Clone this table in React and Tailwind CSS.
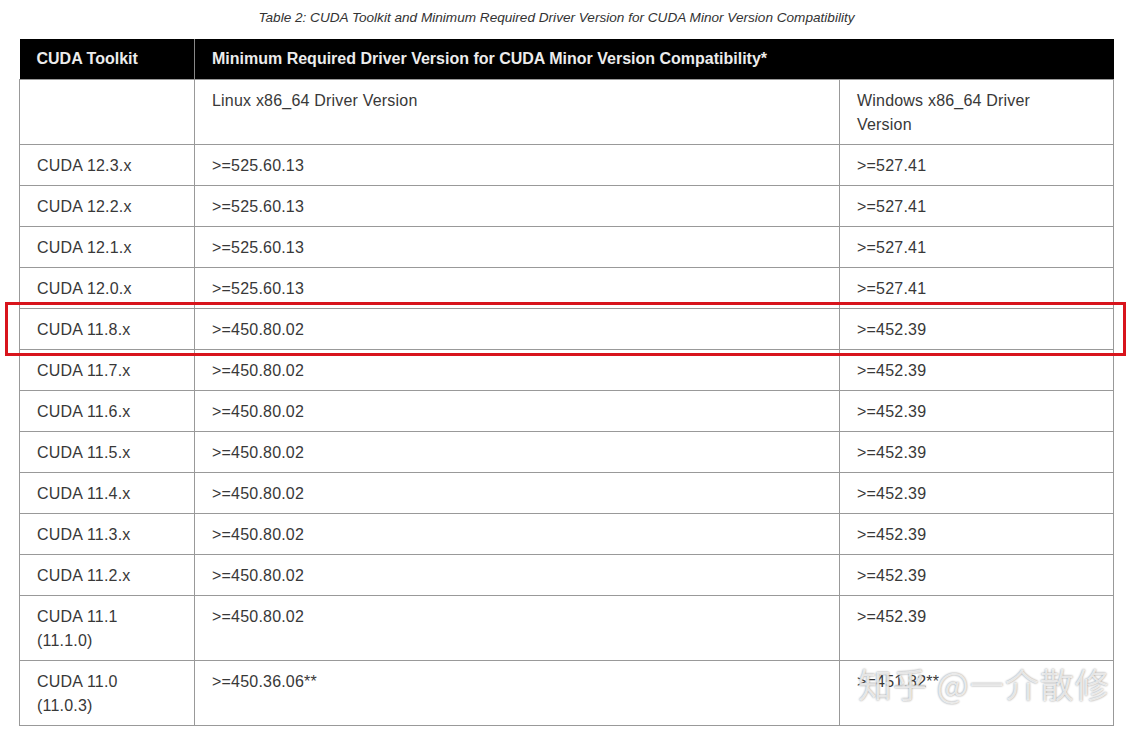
import React from "react";

const rows = [
  ["CUDA 12.3.x", ">=525.60.13", ">=527.41"],
  ["CUDA 12.2.x", ">=525.60.13", ">=527.41"],
  ["CUDA 12.1.x", ">=525.60.13", ">=527.41"],
  ["CUDA 12.0.x", ">=525.60.13", ">=527.41"],
  ["CUDA 11.8.x", ">=450.80.02", ">=452.39"],
  ["CUDA 11.7.x", ">=450.80.02", ">=452.39"],
  ["CUDA 11.6.x", ">=450.80.02", ">=452.39"],
  ["CUDA 11.5.x", ">=450.80.02", ">=452.39"],
  ["CUDA 11.4.x", ">=450.80.02", ">=452.39"],
  ["CUDA 11.3.x", ">=450.80.02", ">=452.39"],
  ["CUDA 11.2.x", ">=450.80.02", ">=452.39"],
  [["CUDA 11.1", "(11.1.0)"], ">=450.80.02", ">=452.39"],
  [["CUDA 11.0", "(11.0.3)"], ">=450.36.06**", ">=451.82**"],
];

const td = "border border-[#999] align-top px-[17px] pt-[9px] pb-[7px] leading-6";

export default function App() {
  return (
    <div className="w-[1135px] h-[734px] bg-white overflow-hidden relative font-['Liberation_Sans',Arial,sans-serif] text-[#383838]">
      <p className="text-center italic text-[13.6px] text-[#333] pt-[8px] pr-[22px] h-[39px]">
        Table 2: CUDA Toolkit and Minimum Required Driver Version for CUDA Minor Version Compatibility
      </p>
      <table className="ml-[19px] w-[1094px] table-fixed border-collapse text-[16px] tracking-[0.2px]">
        <colgroup>
          <col className="w-[175px]" />
          <col className="w-[645px]" />
          <col className="w-[274px]" />
        </colgroup>
        <thead>
          <tr className="bg-black text-[#ececec] h-[40px]">
            <th className="text-left font-bold text-[16px] px-[17px] border-r border-[#888] tracking-normal">CUDA Toolkit</th>
            <th colSpan={2} className="text-left font-bold text-[16px] px-[17px] tracking-normal">
              Minimum Required Driver Version for CUDA Minor Version Compatibility*
            </th>
          </tr>
        </thead>
        <tbody>
          <tr className="h-[65px]">
            <td className={td}></td>
            <td className={td}>Linux x86_64 Driver Version</td>
            <td className={td}>
              <div className="max-w-[200px]">Windows x86_64 Driver Version</div>
            </td>
          </tr>
          {rows.map((r, i) => (
            <tr key={i}>
              <td className={td}>
                {Array.isArray(r[0]) ? r[0].map((l) => <div key={l}>{l}</div>) : r[0]}
              </td>
              <td className={td}>{r[1]}</td>
              <td className={td}>{r[2]}</td>
            </tr>
          ))}
        </tbody>
      </table>
      {/* highlight box */}
      <div className="absolute left-[5px] top-[302px] w-[1121px] h-[54px] border-[3px] border-[#d8141c] pointer-events-none"></div>
      {/* watermark */}
      <div className="absolute left-[858px] top-[662px] text-[34px] leading-[44px] text-white/75 font-['Noto_Sans_CJK_SC',sans-serif] [text-shadow:0_0_2px_#888] tracking-[1px]">
        知乎 @一介散修
      </div>
    </div>
  );
}
